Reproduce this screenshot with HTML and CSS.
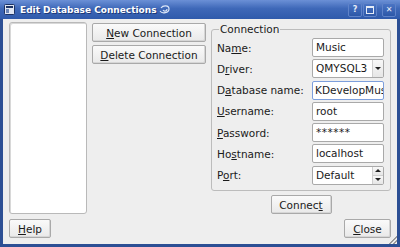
FILE: index.html
```html
<!DOCTYPE html>
<html lang="en">
<head>
    <meta charset="UTF-8">
    <title>Edit Database Connections</title>
    <link rel="stylesheet" href="styles.css">
</head>
<body>

<div class="window">
    <div class="titlebar">
        <svg class="app-icon" width="11" height="11" viewBox="0 0 11 11">
            <rect x="0.5" y="0.5" width="10" height="10" rx="1" fill="#dfe6f3" stroke="#1d3364"/>
            <rect x="2" y="2" width="7" height="2" fill="#1d3364"/>
            <rect x="2" y="5" width="3" height="4" fill="#6c86b8"/>
        </svg>
        <span class="title-text">Edit Database Connections</span>
        <svg class="title-swirl" width="12" height="10" viewBox="0 0 12 10">
            <path d="M2 3 C4 0, 10 0, 10 4 C10 8, 3 9, 1 6 M4 5 C5 7, 8 6, 8 4" fill="none" stroke="#dce6f7" stroke-width="1.2"/>
        </svg>
        <div class="title-buttons">
            <span class="tb-btn">?</span>
            <span class="tb-btn"><span class="tb-max"></span></span>
            <span class="tb-btn tb-close">✕</span>
        </div>
    </div>

    <div class="frame">
        <div class="main">
            <div class="conn-list"></div>

            <div class="side-buttons">
                <button class="btn"><u>N</u>ew Connection</button>
                <button class="btn"><u>D</u>elete Connection</button>
            </div>

            <div class="right-col">
                <fieldset class="group">
                    <legend>Connection</legend>
                    <div class="form-row">
                        <label>Na<u>m</u>e:</label>
                        <div class="field">Music</div>
                    </div>
                    <div class="form-row">
                        <label>D<u>r</u>iver:</label>
                        <div class="field combo">
                            <span>QMYSQL3</span>
                            <span class="combo-arrow"><span class="tri-down"></span></span>
                        </div>
                    </div>
                    <div class="form-row">
                        <label>D<u>a</u>tabase name:</label>
                        <div class="field focus">KDevelopMusic</div>
                    </div>
                    <div class="form-row">
                        <label><u>U</u>sername:</label>
                        <div class="field">root</div>
                    </div>
                    <div class="form-row">
                        <label><u>P</u>assword:</label>
                        <div class="field pass">******</div>
                    </div>
                    <div class="form-row">
                        <label>Ho<u>s</u>tname:</label>
                        <div class="field">localhost</div>
                    </div>
                    <div class="form-row">
                        <label>P<u>o</u>rt:</label>
                        <div class="field combo">
                            <span>Default</span>
                            <span class="spin">
                                <span class="spin-btn"><span class="tri-up"></span></span>
                                <span class="spin-btn"><span class="tri-down"></span></span>
                            </span>
                        </div>
                    </div>
                </fieldset>
                <button class="btn btn-connect">Connec<u>t</u></button>
            </div>
        </div>

        <div class="bottom">
            <button class="btn btn-help"><u>H</u>elp</button>
            <button class="btn btn-close"><u>C</u>lose</button>
        </div>
        <div class="grip"></div>
    </div>
</div>

</body>
</html>
```

FILE: styles.css
```css
body {
    margin: 0;
    padding: 0;
    font-family: 'DejaVu Sans', sans-serif;
    font-size: 10px;
    color: #1a1a1a;
}

.window {
    width: 400px;
    height: 247px;
    display: flex;
    flex-direction: column;
    background-color: #2c4f94;
}

.titlebar {
    height: 19px;
    display: flex;
    align-items: center;
    padding: 0 4px;
    background: linear-gradient(#6b90d6, #3e68b8 45%, #2f5aab);
    color: white;
}

.app-icon {
    margin-right: 5px;
}

.title-text {
    font-weight: bold;
    font-size: 9px;
    text-shadow: 1px 1px 0 #1d3a78;
}

.title-swirl {
    margin-left: 2px;
}

.title-buttons {
    margin-left: auto;
    display: flex;
    gap: 1px;
}

.tb-btn {
    width: 12px;
    height: 12px;
    display: flex;
    align-items: center;
    justify-content: center;
    border: 1px solid #5f83c9;
    border-radius: 2px;
    background: linear-gradient(#4a74c4, #2d58a8);
    color: #e6ecf7;
    font-size: 8px;
    font-weight: bold;
}

.tb-close {
    margin-left: 4px;
}

.tb-max {
    width: 6px;
    height: 5px;
    border: 1px solid #e6ecf7;
    border-top-width: 2px;
}

.frame {
    flex: 1;
    position: relative;
    margin: 0 3px 3px 3px;
    background-color: #eeeeee;
    padding: 3px 6px 0 6px;
    display: flex;
    flex-direction: column;
}

.main {
    display: flex;
    height: 192px;
}

.conn-list {
    width: 77px;
    background-color: white;
    border: 1px solid #b9b9b9;
    border-radius: 3px;
    box-shadow: inset 1px 1px 0 #d8d8d8;
}

.side-buttons {
    display: flex;
    flex-direction: column;
    gap: 3px;
    margin-left: 5px;
    padding-top: 1px;
}

.btn {
    font-family: 'DejaVu Sans', sans-serif;
    font-size: 10.5px;
    color: #1a1a1a;
    height: 19px;
    padding: 0 4px;
    border: 1px solid #a9a9a9;
    border-radius: 2px;
    background: linear-gradient(#fafafa, #e9e9e9);
    box-shadow: inset -1px -1px 0 #d6d6d6;
}

.side-buttons .btn {
    width: 114px;
}

.right-col {
    margin-left: 5px;
    width: 180px;
    display: flex;
    flex-direction: column;
    align-items: center;
}

.group {
    width: 180px;
    box-sizing: border-box;
    margin: 1px 0 0 0;
    padding: 3px 6px 3px 5px;
    border: 1px solid #bcbcbc;
    border-radius: 3px;
}

.group legend {
    padding: 0 1px;
    margin-left: 2px;
    font-size: 10.5px;
}

.form-row {
    display: flex;
    align-items: center;
    justify-content: space-between;
    height: 19px;
    margin-bottom: 2.3px;
}

.form-row label {
    font-size: 10.5px;
}

.field {
    width: 72px;
    height: 19px;
    box-sizing: border-box;
    background-color: white;
    border: 1px solid #a9a9a9;
    border-radius: 2px;
    padding: 0 3px;
    font-size: 10.5px;
    line-height: 17px;
    white-space: nowrap;
    overflow: hidden;
}

.field.focus {
    border-color: #7d9fdc;
    padding-left: 2px;
}

.field.pass {
    letter-spacing: 0.5px;
}

.combo {
    display: flex;
    justify-content: space-between;
    padding-right: 0;
}

.combo-arrow {
    width: 10px;
    border-left: 1px solid #cfcfcf;
    background: linear-gradient(#f8f8f8, #e6e6e6);
    display: flex;
    align-items: center;
    justify-content: center;
}

.spin {
    width: 10px;
    display: flex;
    flex-direction: column;
    border-left: 1px solid #cfcfcf;
}

.spin-btn {
    flex: 1;
    display: flex;
    align-items: center;
    justify-content: center;
    background: linear-gradient(#f8f8f8, #e6e6e6);
}

.spin-btn + .spin-btn {
    border-top: 1px solid #cfcfcf;
}

.tri-down {
    width: 0;
    height: 0;
    border-left: 3px solid transparent;
    border-right: 3px solid transparent;
    border-top: 3px solid #222;
}

.tri-up {
    width: 0;
    height: 0;
    border-left: 3px solid transparent;
    border-right: 3px solid transparent;
    border-bottom: 3px solid #222;
}

.btn-connect {
    margin-top: 4px;
    width: 61px;
}

.bottom {
    display: flex;
    justify-content: space-between;
    margin-top: 5px;
}

.btn-help {
    width: 42px;
}

.btn-close {
    width: 47px;
}

.grip {
    position: absolute;
    right: 0;
    bottom: 0;
    width: 8px;
    height: 8px;
    background: linear-gradient(135deg, transparent 50%, #9a9a9a 50%, #9a9a9a 60%, transparent 60%, transparent 75%, #9a9a9a 75%, #9a9a9a 85%, transparent 85%);
}
```
